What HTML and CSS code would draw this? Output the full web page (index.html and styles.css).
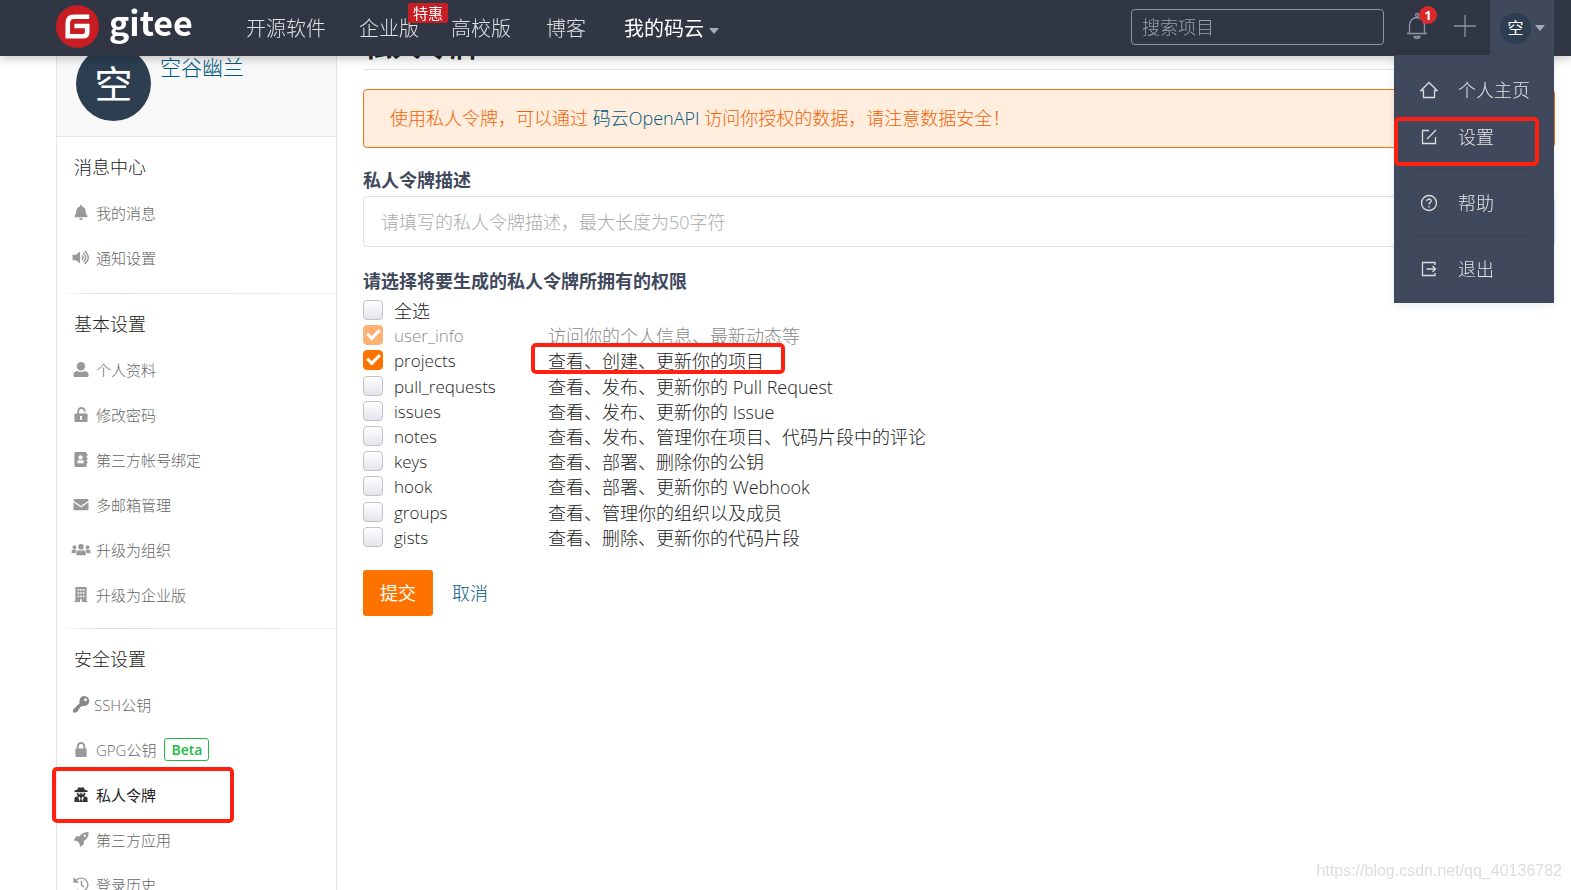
FILE: index.html
```html
<!DOCTYPE html>
<html lang="zh-CN">
<head>
<meta charset="utf-8">
<title>私人令牌 - Gitee</title>
<link rel="stylesheet" href="styles.css">
</head>
<body>
<header class="topbar">
  <a class="logo" href="#">
    <svg class="logo-mark" viewBox="0 0 42 42" aria-hidden="true"><circle cx="21" cy="21" r="21" fill="#c71d23"/><path d="M32.500 11.500H17.500Q11.500 11.500 11.500 17.500V30.500H26.500Q30.500 30.500 30.500 26.500V20.500H18" fill="none" stroke="#fff" stroke-width="4.500"/></svg>
    <span class="logo-text">gitee</span>
  </a>
  <nav class="nav">
    <a href="#">开源软件</a>
    <a href="#" class="nav-ent">企业版<span class="promo">特惠</span></a>
    <a href="#" class="nav-edu">高校版</a>
    <a href="#" class="nav-blog">博客</a>
    <a href="#" class="active">我的码云<span class="caret"></span></a>
  </nav>
  <input class="search" type="text" placeholder="搜索项目" aria-label="搜索项目">
  <button class="icon-btn bell" aria-label="通知">
    <svg width="24" height="28" viewBox="0 0 24 28" fill="none" stroke="#8c92a4" stroke-width="1.300"><circle cx="12" cy="3" r="1.500"/><path d="M2 21.500h20M4.500 21.500V13a7.500 7.500 0 0 1 15 0v8.500M9 24.500c.5 2.500 5.500 2.500 6 0z"/></svg>
    <span class="badge">1</span>
  </button>
  <button class="icon-btn plus" aria-label="新建">
    <svg width="22" height="22" viewBox="0 0 22 22" stroke="#8c92a4" stroke-width="1.300"><path d="M11 0v22M0 11h22"/></svg>
  </button>
  <div class="account">
    <button class="account-btn"><span class="avatar-sm">空</span><span class="caret"></span></button>
    <ul class="menu">
      <li><a href="#"><svg viewBox="0 0 18 18"><path d="M1 9.500 9 1.500l8 8h-2.500v7h-11v-7z"/></svg>个人主页</a></li>
      <li class="marked"><a href="#"><svg viewBox="0 0 18 18"><path d="M9 2.500H2.500v13h13V9M7 11 16 2"/></svg>设置</a></li>
      <li class="split"><a href="#"><svg viewBox="0 0 18 18"><circle cx="9" cy="9" r="7.500"/><path d="M6.800 7.300c0-3 4.400-3 4.400-.2C11.200 8.800 9 8.500 9 10.600M9 12v1.500"/></svg>帮助</a></li>
      <li class="split"><a href="#"><svg viewBox="0 0 18 18"><path d="M15 5V2.500H2.500v13H15V13M6.500 9h9M12.500 6l3 3-3 3"/></svg>退出</a></li>
    </ul>
  </div>
</header>

<div class="page">
  <aside class="sidebar">
    <div class="profile">
      <span class="avatar">空</span>
      <a href="#">空谷幽兰</a>
    </div>
    <section class="group">
      <h2>消息中心</h2>
      <ul>
        <li><a href="#"><svg viewBox="0 0 448 512"><path d="M224 512c35.320 0 63.970-28.650 63.970-64H160.030c0 35.350 28.650 64 63.970 64zm215.390-149.710c-19.320-20.760-55.470-51.990-55.470-154.290 0-77.700-54.480-139.900-127.940-155.160V32c0-17.670-14.320-32-31.980-32s-31.980 14.330-31.980 32v20.840C118.560 68.100 64.080 130.300 64.080 208c0 102.300-36.150 133.530-55.470 154.290-6 6.450-8.660 14.160-8.610 21.710.110 16.400 12.980 32 32.100 32h383.800c19.120 0 32-15.600 32.100-32 .050-7.550-2.610-15.270-8.610-21.710z"/></svg>我的消息</a></li>
        <li><a href="#"><svg viewBox="0 0 18 16"><path d="M0 5h3.500L8 1.500v13L3.500 11H0z"/><path class="line" d="M10 5.500q2.500 2.500 0 5M11.500 3.200q5 4.800 0 9.600M13 1q7.500 7 0 14"/></svg>通知设置</a></li>
      </ul>
    </section>
    <section class="group">
      <h2>基本设置</h2>
      <ul>
        <li><a href="#"><svg viewBox="0 0 16 16"><circle cx="8" cy="4.500" r="4.500"/><path d="M0 15v-1.500Q0 10 4 9.500q4 2 8 0 4 .5 4 4V15q0 1-1 1H1q-1 0-1-1z"/></svg>个人资料</a></li>
        <li><a href="#"><svg viewBox="0 0 16 16"><path class="bold" d="M5 8V4.500a3.500 3.500 0 0 1 7 0V5"/><path fill-rule="evenodd" d="M2 7h12q1 0 1 1v7q0 1-1 1H2q-1 0-1-1V8q0-1 1-1zM7 9.500v4h2v-4z"/></svg>修改密码</a></li>
        <li><a href="#"><svg viewBox="0 0 16 16"><path fill-rule="evenodd" d="M2 0h11q1 0 1 1v1h1v2h-1v2h1v2h-1v2h1v2h-1v3q0 1-1 1H2q-1 0-1-1V1q0-1 1-1zM7.500 3.500a2.300 2.300 0 1 0 .01 0zM4 12h7q0-3.500-2-3.500-1.500 1-3 0-2 0-2 3.500z"/></svg>第三方帐号绑定</a></li>
        <li><a href="#"><svg viewBox="0 0 16 16"><path d="M1 2h14q1 0 1 1v1L8 9.500 0 4V3q0-1 1-1zM0 5.600 8 11.200l8-5.600V13q0 1-1 1H1q-1 0-1-1z"/></svg>多邮箱管理</a></li>
        <li><a href="#"><svg viewBox="0 0 20 16"><circle cx="10" cy="5" r="3"/><circle cx="3" cy="5.500" r="2"/><circle cx="17" cy="5.500" r="2"/><path d="M5 14v-2.500Q5 9 8 8.700q2 1 4 0 3 .3 3 2.800V14zM0 12v-2q0-2 2-2h2l1.500.5Q4 10 4 12zM20 12v-2q0-2-2-2h-2l-1.500.5Q16 10 16 12z"/></svg>升级为组织</a></li>
        <li><a href="#"><svg viewBox="0 0 16 16"><path fill-rule="evenodd" d="M2 0h12v15h1v1H9v-3H7v3H1v-1h1zM4.500 2v2h1.600V2zm2.700 0v2h1.600V2zM10 2v2h1.600V2zM4.500 5.500v2h1.600v-2zm2.700 0v2h1.600v-2zm2.800 0v2h1.600v-2zM4.500 9v2h1.600V9zm2.700 0v2h1.600V9zM10 9v2h1.600V9z"/></svg>升级为企业版</a></li>
      </ul>
    </section>
    <section class="group">
      <h2>安全设置</h2>
      <ul>
        <li><a href="#" class="key"><svg viewBox="0 0 18 18"><path fill-rule="evenodd" d="M12.500 0a5.300 5.300 0 1 1-1.800 10.300L9.500 11.500H8v1.700H6.500V15L4 17.500H.5v-3l7.200-7.200A5.300 5.300 0 0 1 12.500 0zm1.300 2.300a1.600 1.600 0 1 0 .01 0z"/></svg>SSH公钥</a></li>
        <li><a href="#"><svg viewBox="0 0 16 16"><path class="bold" d="M4.500 8V4.500a3.500 3.500 0 0 1 7 0V8"/><rect x="2" y="7" width="12" height="9" rx="1"/></svg>GPG公钥<span class="beta">Beta</span></a></li>
        <li class="marked"><a href="#" class="current"><svg viewBox="0 0 16 16"><path fill-rule="evenodd" d="M4 3 5.200.2Q8 1 10.800.2L12 3l3 .8v1.400H1V3.800zM3.500 6h9v2L11 9.800l2.500.5q1.500.5 1.500 2V16H1v-3.700q0-1.500 1.500-2L5 9.800 3.500 8zM5.300 6.500v1.200h2V6.500zm3.400 0v1.200h2V6.500zM6.700 10.500l.8 1.500-.8 3.500L5 11zM9.300 10.500 8.500 12l.8 3.500L11 11z"/></svg>私人令牌</a></li>
        <li><a href="#"><svg viewBox="0 0 16 16"><path fill-rule="evenodd" d="M16 0q.8 6-5 9.700V13l-4 3-.7-3.800L3.800 9.700 0 9l3-4.500h3.300Q10 0 16 0zM12 2.700a1.300 1.300 0 1 0 .01 0z"/></svg>第三方应用</a></li>
        <li><a href="#"><svg viewBox="0 0 16 16"><path class="line" stroke-width="2" d="M3 3.500A7 7 0 1 1 4 13.800M8.500 4v4.500l2.500 2"/><path d="M0 0v6h6z"/></svg>登录历史</a></li>
      </ul>
    </section>
  </aside>

  <main class="content">
    <h1>私人令牌</h1>
    <p class="notice">使用私人令牌，可以通过 <a href="#">码云OpenAPI</a> 访问你授权的数据，请注意数据安全！</p>
    <form>
      <label class="field-label" for="desc">私人令牌描述</label>
      <input class="field" id="desc" type="text" placeholder="请填写的私人令牌描述，最大长度为50字符">
      <fieldset class="scopes">
        <legend class="field-label">请选择将要生成的私人令牌所拥有的权限</legend>
        <div class="rows">
          <label><input type="checkbox"><span>全选</span></label>
          <label class="disabled"><input type="checkbox" checked disabled><span class="name">user_info</span><span>访问你的个人信息、最新动态等</span></label>
          <label class="marked"><input type="checkbox" checked><span class="name">projects</span><span>查看、创建、更新你的项目</span></label>
          <label><input type="checkbox"><span class="name">pull_requests</span><span>查看、发布、更新你的 Pull Request</span></label>
          <label><input type="checkbox"><span class="name">issues</span><span>查看、发布、更新你的 Issue</span></label>
          <label><input type="checkbox"><span class="name">notes</span><span>查看、发布、管理你在项目、代码片段中的评论</span></label>
          <label><input type="checkbox"><span class="name">keys</span><span>查看、部署、删除你的公钥</span></label>
          <label><input type="checkbox"><span class="name">hook</span><span>查看、部署、更新你的 Webhook</span></label>
          <label><input type="checkbox"><span class="name">groups</span><span>查看、管理你的组织以及成员</span></label>
          <label><input type="checkbox"><span class="name">gists</span><span>查看、删除、更新你的代码片段</span></label>
        </div>
      </fieldset>
      <div class="actions">
        <button type="submit" class="submit">提交</button>
        <a href="#">取消</a>
      </div>
    </form>
  </main>
</div>
<div class="watermark">https://blog.csdn.net/qq_40136782</div>
</body>
</html>
```
FILE: styles.css
```css
*, *::before, *::after { box-sizing: border-box; }
body {
  margin: 0;
  font: 300 18px/24px "Open Sans", "Noto Sans CJK SC", sans-serif;
  color: #222;
  background: #fff;
}
a { color: #005980; text-decoration: none; }
ul { list-style: none; margin: 0; padding: 0; }
button { font: inherit; border: 0; background: none; padding: 0; cursor: pointer; }

/* top bar */
.topbar {
  position: fixed;
  top: 0;
  left: 0;
  right: 0;
  z-index: 10;
  height: 56px;
  padding: 0 17px 0 56px;
  display: flex;
  align-items: center;
  background: #303643;
  box-shadow: 0 2px 10px rgba(0, 0, 0, .25);
}
.logo { display: flex; align-items: center; gap: 10px; width: 190px; padding-bottom: 4px; }
.logo-mark { width: 43px; height: 43px; }
.logo-text { color: #fff; font: 700 34px/40px "Noto Sans CJK SC", sans-serif; padding-bottom: 8px; }
.nav { display: flex; flex: 1; font-size: 20px; padding-top: 2px; }
.nav a { position: relative; color: #e0e1e3; margin-right: 33px; white-space: nowrap; }
.nav .nav-ent { margin-right: 32px; }
.nav .nav-edu { margin-right: 35px; }
.nav .nav-blog { margin-right: 38px; }
.nav a.active { color: #fff; font-weight: 400; margin-right: 0; }
.promo {
  position: absolute;
  left: 49px;
  top: -14px;
  padding: 0 5px;
  font-size: 15px;
  font-weight: 400;
  line-height: 20px;
  color: #fff;
  background: #c71d23;
  border-radius: 2px;
}
.caret {
  display: inline-block;
  border: 5px solid transparent;
  border-top: 6px solid #a6abb8;
  border-bottom: 0;
  margin-left: 5px;
  vertical-align: 2px;
}
.search {
  width: 253px;
  height: 36px;
  padding: 0 10px;
  margin-bottom: 2px;
  font: inherit;
  color: #fff;
  background: transparent;
  border: 1px solid #8c92a4;
  border-radius: 4px;
}
.search::placeholder { color: #9da1a9; opacity: 1; }
.icon-btn { position: relative; display: flex; padding-bottom: 4px; }
.bell { margin-left: 21px; }
.plus { margin-left: 25px; }
.badge {
  position: absolute;
  left: 14px;
  top: -6px;
  width: 18px;
  height: 18px;
  border-radius: 50%;
  background: #db2828;
  color: #fff;
  font: 700 13px/18px "Open Sans", sans-serif;
  text-align: center;
}
.account { position: relative; margin-left: 14px; }
.account-btn {
  display: flex;
  align-items: center;
  width: 64px;
  height: 56px;
  padding-left: 10px;
  background: #40485b;
}
.account-btn .caret { margin-left: 4px; }
.avatar-sm {
  width: 31px;
  height: 31px;
  border-radius: 50%;
  background: #2c3e50;
  color: #fff;
  font-size: 16px;
  font-weight: 400;
  line-height: 30px;
  text-align: center;
}
.menu {
  position: absolute;
  right: 0;
  top: 55px;
  width: 160px;
  padding: 11px 0;
  background: #40485b;
  box-shadow: 0 2px 8px rgba(0, 60, 100, .1);
}
.menu a {
  display: flex;
  align-items: center;
  gap: 20px;
  height: 47px;
  padding-left: 26px;
  color: #e4e5e8;
  white-space: nowrap;
}
.menu svg { width: 18px; height: 18px; fill: none; stroke: #dcdde1; stroke-width: 1.3; }
.menu .split::before {
  content: "";
  display: block;
  height: 1px;
  margin: 9px 23px;
  background: #384052;
}

/* highlight frames */
.marked { position: relative; }
.marked::after {
  content: "";
  position: absolute;
  border: 4px solid #ff2010;
  border-radius: 5px;
  pointer-events: none;
}
.menu .marked::after { left: 0; right: 15px; top: 4px; bottom: -6px; }
.group .marked::after { left: -5px; width: 182px; top: -5px; bottom: -6px; }
.rows .marked::after { left: 168px; width: 254px; top: -7px; height: 31px; }

/* page */
.page { display: flex; gap: 26px; height: 100vh; padding: 0 16px 0 56px; overflow: hidden; }
.sidebar { flex: 0 0 281px; border: solid #e1e6eb; border-width: 0 1px; }
.profile {
  display: flex;
  gap: 9px;
  height: 137px;
  padding: 46px 0 0 19px;
  background: #f8f8f8;
  border-bottom: 1px solid #e1e6eb;
  font-size: 21px;
  line-height: 42px;
}
.avatar {
  width: 75px;
  height: 75px;
  border-radius: 50%;
  background: #2c3e50;
  color: #fff;
  font-size: 38px;
  font-weight: 400;
  line-height: 74px;
  text-align: center;
}
.group { padding: 8px 0 13px; }
.group + .group { padding: 8px 0 11px; border-top: 1px solid; border-image: linear-gradient(90deg, #fff, #ddd 15%, #f3f3f3) 1; }
.group h2 { margin: 0; padding-left: 17px; font-size: 18px; font-weight: 300; line-height: 45px; }
.group a { display: flex; align-items: center; height: 45px; padding-left: 14px; font-size: 15px; color: #666; }
.group svg { width: 20px; height: 15px; margin-right: 5px; fill: #999; }
.group .line { fill: none; stroke: #999; stroke-width: 1.5; }
.group .bold { fill: none; stroke: #999; stroke-width: 2; }
.group .key svg { height: 17px; margin-right: 3px; fill: #888; }
.group .current { color: #222; font-weight: 400; }
.group .current svg { fill: #333; }
.beta {
  margin-left: 8px;
  padding: 0 6px;
  border: 1px solid #21ba45;
  border-radius: 3px;
  color: #21ba45;
  font-size: 14px;
  font-weight: 600;
  line-height: 21px;
}
.content { flex: 1; min-width: 0; }
h1 {
  height: 70px;
  margin: 0 0 19px;
  padding-top: 28px;
  font-size: 29px;
  line-height: 36px;
  font-weight: 700;
  border-bottom: 1px solid #dfe3e8;
}
.notice {
  margin: 0;
  padding: 16px 26px 17px;
  color: #f26202;
  background: #ffedde;
  border: 1px solid #f56f16;
  border-radius: 4px;
}
.field-label { display: block; padding: 0; font-weight: 700; color: #40485b; line-height: 24px; }
.notice + form { padding-top: 20px; }
.field {
  width: 100%;
  height: 51px;
  margin: 4px 0 22px;
  padding: 0 17px;
  font: inherit;
  border: 1px solid #dee0ea;
  border-radius: 4px;
}
.field::placeholder { color: #aaa; opacity: 1; }
.scopes { border: 0; margin: 0; padding: 0; }
.rows { display: grid; grid-auto-rows: 1fr; height: 252px; margin-top: 7px; }
.rows label { display: grid; grid-template-columns: 31px 154px 1fr; align-items: start; }
.rows span { line-height: 22px; }
.rows .name { font-size: 17px; }
.rows .disabled { opacity: .55; }
.rows input {
  appearance: none;
  width: 20px;
  height: 20px;
  margin: 0;
  border: 1px solid #c0c3c9;
  border-radius: 4px;
  background: linear-gradient(#fff, #e3e5ed);
}
.rows input:checked { display: grid; place-items: center; border-color: #fe7300; background: #fe7300; }
.rows input:checked::before {
  content: "";
  width: 13px;
  height: 8px;
  margin-bottom: 4px;
  border: solid #fff;
  border-width: 0 0 3px 3px;
  transform: rotate(-45deg);
}
.actions { display: flex; align-items: center; gap: 19px; margin-top: 18px; }
.submit { width: 70px; height: 46px; color: #fff; background: #fe7300; border-radius: 3px; font-weight: 400; }
.watermark {
  position: fixed;
  right: 9px;
  bottom: 8px;
  font: 16px/22px "Liberation Sans", sans-serif;
  color: #ddd;
}
```
